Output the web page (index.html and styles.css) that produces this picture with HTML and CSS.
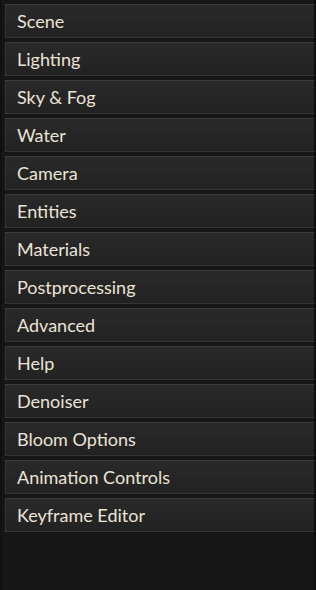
FILE: index.html
```html
<!DOCTYPE html>
<html lang="en">
<head>
  <meta charset="UTF-8" />
  <meta name="viewport" content="width=device-width, initial-scale=1.0"/>
  <title>Panels</title>
  <link rel="stylesheet" href="styles.css">
</head>
<body>

  <div class="panel">
    <div class="section">Scene</div>
    <div class="section">Lighting</div>
    <div class="section">Sky &amp; Fog</div>
    <div class="section">Water</div>
    <div class="section">Camera</div>
    <div class="section">Entities</div>
    <div class="section">Materials</div>
    <div class="section">Postprocessing</div>
    <div class="section">Advanced</div>
    <div class="section">Help</div>
    <div class="section">Denoiser</div>
    <div class="section">Bloom Options</div>
    <div class="section">Animation Controls</div>
    <div class="section">Keyframe Editor</div>
  </div>

</body>
</html>
```

FILE: styles.css
```css
html, body {
  height: 100%;
}

body {
  margin: 0;
  background: #0e0e0e;
  font-family: 'Lato', sans-serif;
}

.panel {
  box-sizing: border-box;
  height: 100%;
  margin-right: 2px;
  padding: 4px 0 0 3px;
  background: #161616;
  border-left: 2px solid #101010;
  display: flex;
  flex-direction: column;
  gap: 4px;
}

.section {
  box-sizing: border-box;
  height: 34px;
  padding: 0 11px;
  display: flex;
  align-items: center;
  color: #ebe3d7;
  font-size: 18px;
  background: linear-gradient(#292929, #222222);
  border: 1px solid #353535;
  border-top-color: #3c3c3c;
  border-right: none;
  cursor: pointer;
}

.section:hover {
  background: linear-gradient(#313131, #282828);
}
```
